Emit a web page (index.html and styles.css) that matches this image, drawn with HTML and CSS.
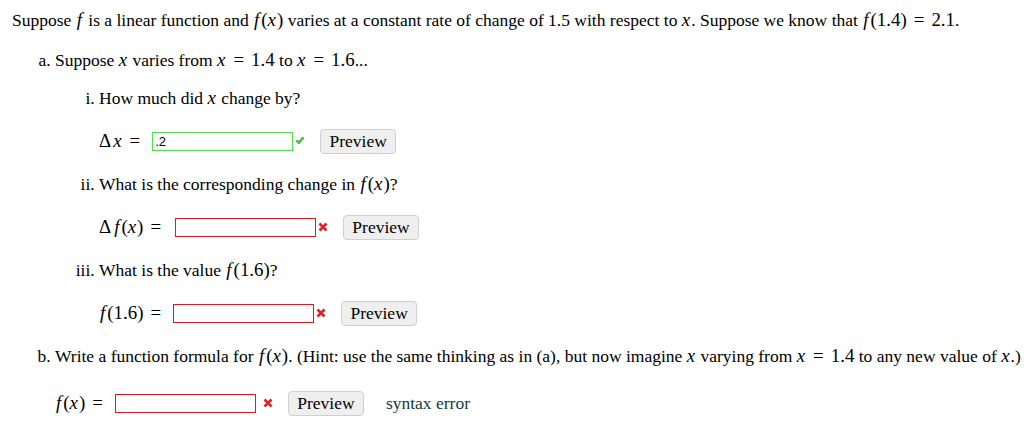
FILE: index.html
```html
<!DOCTYPE html>
<html lang="en">
<head>
    <meta charset="utf-8" />
    <title>Linear functions</title>
    <link rel="stylesheet" href="styles.css">
</head>
<body>
<p class="intro">Suppose <span class="m"><i class="f">f</i></span> is a linear function and <span class="m"><i class="f">f</i>(<i>x</i>)</span> varies at a constant rate of change of 1.5 with respect to <span class="m"><i>x</i></span>. Suppose we know that <span class="m"><i class="f">f</i>(1.4)<span class="eq">=</span>2.1</span>.</p>
<ol class="parts">
    <li>
        <div class="txt">Suppose <span class="m"><i>x</i></span> varies from <span class="m"><i>x</i><span class="eq">=</span>1.4</span> to <span class="m"><i>x</i><span class="eq">=</span>1.6</span>...</div>
        <ol class="sub">
            <li class="first">
                <div class="txt">How much did <span class="m"><i>x</i></span> change by?</div>
                <div class="row">
                    <span class="lbl m"><span class="delta">Δ</span><i>x</i><span class="eq">=</span></span>
                    <span class="box ok">.2</span>
                    <svg class="mark" width="10" height="10" viewBox="0 0 10 10"><path d="M1 5.2 L3.8 8 L9 2.2 L7.6 1 L3.8 5.4 L2.3 3.9 Z" fill="#4cd13f" stroke="#2d8a26" stroke-width="0.7"/></svg>
                    <button class="preview">Preview</button>
                </div>
            </li>
            <li>
                <div class="txt">What is the corresponding change in <span class="m"><i class="f">f</i>(<i>x</i>)</span>?</div>
                <div class="row">
                    <span class="lbl m wide-lbl"><span class="delta">Δ</span><i class="f">f</i>(<i>x</i>)<span class="eq">=</span></span>
                    <span class="box bad"></span>
                    <svg class="mark" width="10" height="10" viewBox="0 0 10 10"><path d="M1.5 1.5 L8.5 8.5 M8.5 1.5 L1.5 8.5" stroke="#e0202a" stroke-width="2.6"/></svg>
                    <button class="preview">Preview</button>
                </div>
            </li>
            <li>
                <div class="txt">What is the value <span class="m"><i class="f">f</i>(1.6)</span>?</div>
                <div class="row">
                    <span class="lbl m"><i class="f">f</i>(1.6)<span class="eq">=</span></span>
                    <span class="box bad"></span>
                    <svg class="mark" width="10" height="10" viewBox="0 0 10 10"><path d="M1.5 1.5 L8.5 8.5 M8.5 1.5 L1.5 8.5" stroke="#e0202a" stroke-width="2.6"/></svg>
                    <button class="preview">Preview</button>
                </div>
            </li>
        </ol>
    </li>
    <li>
        <div class="txt">Write a function formula for <span class="m"><i class="f">f</i>(<i>x</i>)</span>. (Hint: use the same thinking as in (a), but now imagine <span class="m"><i>x</i></span> varying from <span class="m"><i>x</i><span class="eq">=</span>1.4</span> to any new value of <span class="m"><i>x</i></span>.)</div>
        <div class="row last">
            <span class="lbl m"><i class="f">f</i>(<i>x</i>)<span class="eq">=</span></span>
            <span class="box bad"></span>
            <svg class="mark wide" width="10" height="10" viewBox="0 0 10 10"><path d="M1.5 1.5 L8.5 8.5 M8.5 1.5 L1.5 8.5" stroke="#e0202a" stroke-width="2.6"/></svg>
            <button class="preview">Preview</button>
            <span class="err">syntax error</span>
        </div>
    </li>
</ol>
</body>
</html>
```

FILE: styles.css
```css
* {
    margin: 0;
    padding: 0;
}
html, body {
    overflow: hidden;
}
body {
    font-family: "Liberation Serif", "Times New Roman", serif;
    font-size: 17.5px;
    color: #000;
    background: #fff;
    padding: 10px 0 0 12px;
}
.m {
    font-family: "Liberation Serif", serif;
    font-size: 1.08em;
}
.m i {
    padding-right: 1px;
}
.m i.f {
    padding-left: 1px;
    padding-right: 2px;
}
.delta {
    padding-right: 2px;
}
.eq {
    margin: 0 7px;
}
.intro, .txt {
    line-height: 20px;
    white-space: nowrap;
}
.parts {
    list-style: lower-alpha;
    padding-left: 43px;
    margin-top: 20px;
}
.parts > li + li {
    margin-top: 20px;
}
.sub {
    list-style: lower-roman;
    padding-left: 44px;
}
.sub > li {
    margin-top: 20px;
}
.sub > li.first {
    margin-top: 18px;
}
.row {
    display: flex;
    align-items: center;
    height: 26px;
    margin-top: 20px;
    white-space: nowrap;
}
.row.last {
    margin-top: 24px;
}
.lbl {
    margin-right: 5px;
}
.lbl.wide-lbl {
    margin-right: 7px;
}
.box {
    display: inline-block;
    box-sizing: border-box;
    width: 141px;
    height: 19px;
    border: 1px solid;
    font-family: "Liberation Sans", Arial, sans-serif;
    font-size: 13px;
    line-height: 17px;
    padding-left: 2px;
    background: #fff;
}
.box.ok {
    border-color: #52e052;
}
.box.bad {
    border-color: #e8151f;
}
.mark {
    margin-left: 2px;
    margin-right: 15px;
}
.mark.wide {
    margin-left: 7px;
}
.preview {
    font-family: "Liberation Serif", serif;
    font-size: 17.5px;
    height: 25px;
    width: 76px;
    background: #efefef;
    border: 1px solid #cfcfcf;
    border-radius: 4px;
    color: #000;
}
.err {
    margin-left: 22px;
    color: #0e3b3b;
}
```
